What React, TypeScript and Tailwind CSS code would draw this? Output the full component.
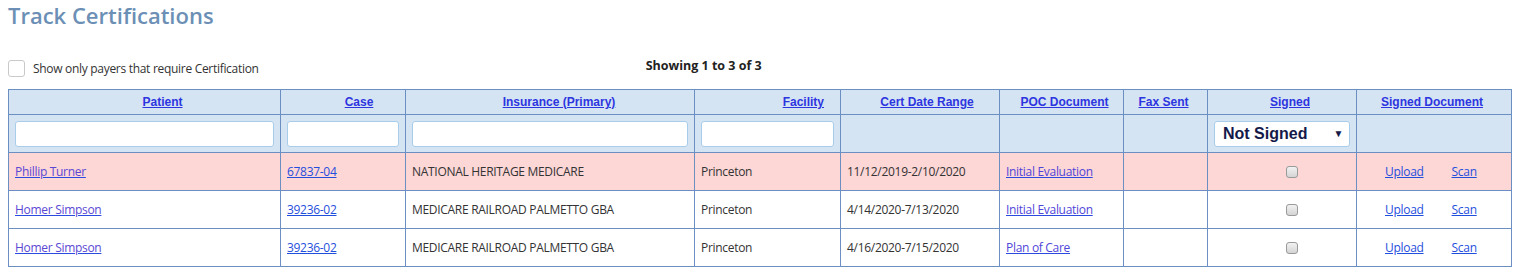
import React from 'react';

const cols = [272, 125, 289, 146, 159, 124, 84, 149, 155];

const headers: { label: string; cls: string }[] = [
  { label: 'Patient', cls: 'text-center pl-[42px]' },
  { label: 'Case', cls: 'text-center pl-[38px]' },
  { label: 'Insurance (Primary)', cls: 'text-center pl-[24px]' },
  { label: 'Facility', cls: 'text-right pr-[16px]' },
  { label: 'Cert Date Range', cls: 'text-center pl-[20px]' },
  { label: 'POC Document', cls: 'text-center pl-[12px]' },
  { label: 'Fax Sent', cls: 'text-center pl-[2px]' },
  { label: 'Signed', cls: 'text-center pl-[22px]' },
  { label: 'Signed Document', cls: 'text-center pl-[2px]' },
];

const rows = [
  {
    patient: 'Phillip Turner',
    caseNo: '67837-04',
    insurance: 'NATIONAL HERITAGE MEDICARE',
    facility: 'Princeton',
    range: '11/12/2019-2/10/2020',
    doc: 'Initial Evaluation',
    highlight: true,
  },
  {
    patient: 'Homer Simpson',
    caseNo: '39236-02',
    insurance: 'MEDICARE RAILROAD PALMETTO GBA',
    facility: 'Princeton',
    range: '4/14/2020-7/13/2020',
    doc: 'Initial Evaluation',
    highlight: false,
  },
  {
    patient: 'Homer Simpson',
    caseNo: '39236-02',
    insurance: 'MEDICARE RAILROAD PALMETTO GBA',
    facility: 'Princeton',
    range: '4/16/2020-7/15/2020',
    doc: 'Plan of Care',
    highlight: false,
  },
];

const cell = 'border border-[#6b8fc2] px-[6px] align-middle';

function FilterInput() {
  return (
    <input
      type="text"
      className="block w-full h-[26px] rounded-[3px] border border-[#a8cdea] bg-white outline-none"
    />
  );
}

export default function App() {
  return (
    <div className="bg-white w-[1516px] h-[273px] px-2 font-['Open_Sans',sans-serif] text-[#333]">
      {/* Title */}
      <h1 className="pt-[1px] text-[22px] leading-[28px] font-semibold text-[#6c8fb6]">
        Track Certifications
      </h1>

      {/* Toolbar */}
      <div className="mt-[30px] flex items-center h-[18px]">
        <span className="w-[17px] h-[17px] rounded-[3px] border border-[#c9c9c9] bg-white" />
        <span className="ml-[8px] text-[12px] leading-[17px] tracking-[-0.3px] text-[#333]">
          Show only payers that require Certification
        </span>
        <span className="ml-[387px] -mt-[5px] text-[12.5px] font-bold leading-[17px] text-[#222]">
          Showing 1 to 3 of 3
        </span>
      </div>

      {/* Table */}
      <table className="mt-[12px] border-collapse table-fixed w-[1503px] text-[12px] tracking-[-0.3px]">
        <colgroup>
          {cols.map((w, i) => (
            <col key={i} style={{ width: w }} />
          ))}
        </colgroup>
        <thead>
          <tr className="h-[25px] bg-[#d5e4f3]">
            {headers.map((h) => (
              <th
                key={h.label}
                className={`${cell} ${h.cls} font-bold font-['Liberation_Sans',Arial,sans-serif] tracking-normal`}
              >
                <a href="#" className="text-[#2d35e0] underline">
                  {h.label}
                </a>
              </th>
            ))}
          </tr>
          <tr className="h-[38px] bg-[#d5e4f3]">
            <th className={cell}>
              <FilterInput />
            </th>
            <th className={cell}>
              <FilterInput />
            </th>
            <th className={cell}>
              <FilterInput />
            </th>
            <th className={cell}>
              <FilterInput />
            </th>
            <th className={cell} />
            <th className={cell} />
            <th className={cell} />
            <th className={cell}>
              <div className="flex items-center justify-between h-[26px] rounded-[3px] border border-[#a8cdea] bg-white pl-[8px] pr-[6px]">
                <span className="font-['Liberation_Sans',Arial,sans-serif] text-[16px] font-bold tracking-normal text-[#15194a]">
                  Not Signed
                </span>
                <span className="text-[10px] text-[#15194a]">▼</span>
              </div>
            </th>
            <th className={cell} />
          </tr>
        </thead>
        <tbody>
          {rows.map((r, i) => (
            <tr key={i} className={`h-[38px] ${r.highlight ? 'bg-[#fdd6d6]' : 'bg-white'}`}>
              <td className={cell}>
                <a href="#" className="text-[#5a48d4] underline decoration-[#2b4be0]">
                  {r.patient}
                </a>
              </td>
              <td className={cell}>
                <a href="#" className="text-[#1f4fdc] underline">
                  {r.caseNo}
                </a>
              </td>
              <td className={cell}>{r.insurance}</td>
              <td className={cell}>{r.facility}</td>
              <td className={cell}>{r.range}</td>
              <td className={cell}>
                <a href="#" className="text-[#4f45d8] underline decoration-[#2b4be0]">
                  {r.doc}
                </a>
              </td>
              <td className={cell} />
              <td className={`${cell} text-center pl-[26px]`}>
                <span className="inline-block align-middle w-[12px] h-[12px] rounded-[3px] border border-[#9a9a9a] bg-gradient-to-b from-[#f2f2f2] to-[#d4d4d4]" />
              </td>
              <td className={cell}>
                <div className="flex pl-[22px] gap-[28px]">
                  <a href="#" className="text-[#1f4fdc] underline">
                    Upload
                  </a>
                  <a href="#" className="text-[#1f4fdc] underline">
                    Scan
                  </a>
                </div>
              </td>
            </tr>
          ))}
        </tbody>
      </table>
    </div>
  );
}
